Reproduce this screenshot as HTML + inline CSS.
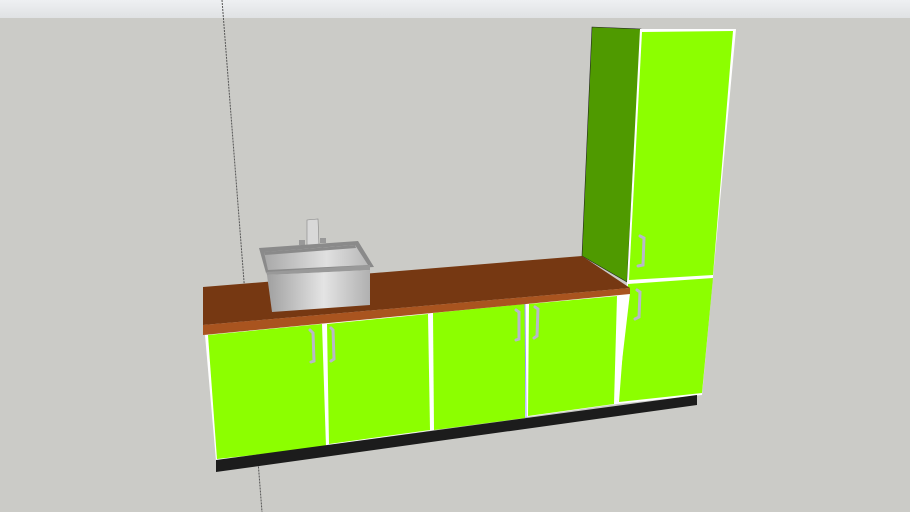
<!DOCTYPE html>
<html><head><style>html,body{margin:0;padding:0;width:910px;height:512px;overflow:hidden;background:#cbcbc7}</style></head>
<body>
<svg width="910" height="512" viewBox="0 0 910 512" xmlns="http://www.w3.org/2000/svg">
<defs>
<linearGradient id="sky" x1="0" y1="0" x2="0" y2="1"><stop offset="0" stop-color="#eef0f2"/><stop offset="1" stop-color="#e0e2e4"/></linearGradient>
<linearGradient id="steel" x1="0" y1="0" x2="1" y2="0"><stop offset="0" stop-color="#a0a0a0"/><stop offset="0.55" stop-color="#e4e4e4"/><stop offset="1" stop-color="#b0b0b0"/></linearGradient>
<linearGradient id="steel2" x1="0" y1="0" x2="1" y2="0"><stop offset="0" stop-color="#a8a8a8"/><stop offset="0.6" stop-color="#e0e0e0"/><stop offset="1" stop-color="#b8b8b8"/></linearGradient>
</defs>
<rect x="0" y="0" width="910" height="18" fill="url(#sky)"/>
<line x1="222" y1="0" x2="262" y2="512" stroke="#555" stroke-width="1" stroke-dasharray="2,1"/>
<polygon points="592,27 641,29 627,282 582,256" fill="#4f9a00" stroke="#222" stroke-width="0.6"/>
<polygon points="640,29 736,29 702,395 617,404 627,282" fill="#ffffff"/>
<polygon points="642,32 733,31 713,275 629,280" fill="#8cff00"/>
<polygon points="628,284 713,278 702,393 619,402" fill="#8cff00"/>
<polygon points="205,335 630,293 617,404 216,461" fill="#ffffff"/>
<polygon points="208,335 322,324 326,447 217,459" fill="#8cff00"/>
<polygon points="327,324 428,314 430,430 329,444" fill="#8cff00"/>
<polygon points="433,313 525,304 525,418 434,430" fill="#8cff00"/>
<polygon points="529,304 617,296 614,404 528,416" fill="#8cff00"/>
<line x1="525" y1="304" x2="526" y2="418" stroke="#9a9aff" stroke-width="1"/>
<polygon points="216,460 697,395 697,405 216,472" fill="#1c1c1c"/>
<polygon points="203,287 582,256 630,288 203,325" fill="#763812"/>
<polygon points="203,325 630,288 630,294 203,335" fill="#a9541f"/>
<g stroke="#b8b8c8" stroke-width="3" fill="none" stroke-linecap="round">
<path d="M310,330 L313,333 L314,361 L311,362"/>
<path d="M331,328 L333,330 L334,359 L331,361"/>
<path d="M516,310 L519,312 L519,339 L516,340"/>
<path d="M535,307 L538,309 L537,336 L534,338"/>
<path d="M640,236 L644,238 L643,265 L638,266"/>
<path d="M637,290 L640,292 L639,317 L635,319"/>
</g>
<polygon points="307,220 318,219 319,246 307,247" fill="#d8d8d8" stroke="#888" stroke-width="0.6"/>
<rect x="299" y="240" width="6" height="5" fill="#999"/>
<rect x="320" y="238" width="6" height="5" fill="#999"/>
<polygon points="259,248 358,241 374,267 266,273" fill="#8a8a8a"/>
<polygon points="264,252 355,245 368,265 268,270" fill="url(#steel2)"/>
<polygon points="264,252 355,245 356,248 265,255" fill="#8a8a8a"/>
<polygon points="266,272 370,265 370,270 267,275" fill="#999"/>
<polygon points="267,275 370,270 370,305 272,312" fill="url(#steel)"/>
</svg>
</body></html>
